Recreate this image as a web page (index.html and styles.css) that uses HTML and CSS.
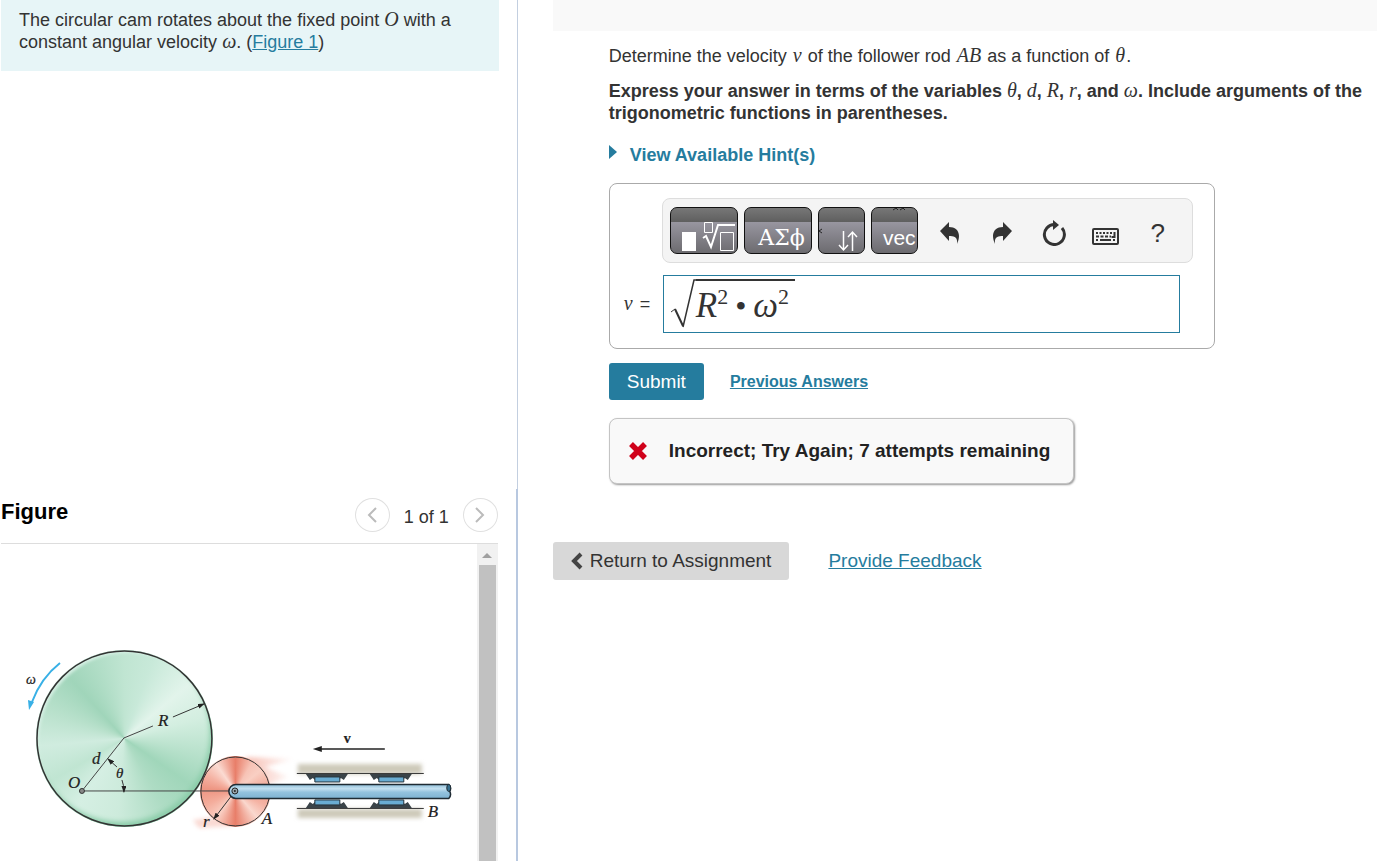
FILE: index.html
```html
<!DOCTYPE html>
<html lang="en">

<head>
  <meta charset="UTF-8">
  <meta name="viewport" content="width=device-width, initial-scale=1.0">
  <title>Circular cam</title>
  <link rel="stylesheet" href="styles.css">
</head>

<body>
  <div class="page">
    <aside class="left">
      <section class="statement">
        <p class="intro">The circular cam rotates about the fixed point <i class="math">O</i> with a constant angular velocity <i class="math">ω</i>. (<a href="#figure">Figure 1</a>)</p>
      </section>

      <section class="figure" id="figure">
        <header class="figure-head">
          <h2>Figure</h2>
          <div class="pager">
            <button type="button" class="round" aria-label="Previous figure">
              <svg width="12" height="18" viewBox="0 0 12 18"><path d="M10 2L3 9l7 7" fill="none" stroke="#bbb" stroke-width="2"/></svg>
            </button>
            <span>1 of 1</span>
            <button type="button" class="round" aria-label="Next figure">
              <svg width="12" height="18" viewBox="0 0 12 18"><path d="M2 2l7 7-7 7" fill="none" stroke="#bbb" stroke-width="2"/></svg>
            </button>
          </div>
        </header>
        <div class="figure-body">
          <svg class="cam" width="476" height="317" viewBox="1 544 476 317">
            <defs>
              <linearGradient id="rod" x1="0" y1="0" x2="0" y2="1">
                <stop offset="0" stop-color="#8fbfd9"/>
                <stop offset=".3" stop-color="#c3e0f0"/>
                <stop offset=".55" stop-color="#94c3de"/>
                <stop offset="1" stop-color="#7db2d1"/>
              </linearGradient>
              <linearGradient id="streak" x1="0" x2="1">
                <stop offset="0" stop-color="#f3a292"/>
                <stop offset="1" stop-color="#f3a292" stop-opacity="0"/>
              </linearGradient>
              <filter id="soft" x="-20%" y="-50%" width="140%" height="200%"><feGaussianBlur stdDeviation="2"/></filter>
              <marker id="head" markerUnits="userSpaceOnUse" markerWidth="7" markerHeight="5" refX="6" refY="2.500" orient="auto">
                <path d="M0 0l7 2.500-7 2.500z" fill="#222"/>
              </marker>
              <g id="pad">
                <path d="M0 0h42l-4 6-3-2-2 2H9L7 4 4 6z" fill="#3a4348"/>
                <path d="M9 3h25v5H9z" fill="#69acd2" stroke="#26343c"/>
              </g>
            </defs>

            <!-- motion streaks -->
            <path d="M245 757l50 2-30 8 24 10-22 8z" fill="url(#streak)" filter="url(#soft)" opacity=".7"/>
            <path d="M193 820l30-4 10 10-34 2z" fill="#f3a292" filter="url(#soft)" opacity=".4"/>

            <!-- cam and roller -->
            <foreignObject x="36" y="650" width="177" height="177"><div class="disc disc-green"></div></foreignObject>
            <foreignObject x="200" y="756" width="71" height="71"><div class="disc disc-red"></div></foreignObject>
            <g fill="none" stroke="#333">
              <circle cx="124.500" cy="738.500" r="87.500" stroke-width="1.500"/>
              <circle cx="235.500" cy="791.500" r="34.500"/>
              <path d="M153 726l-29 12-42 53h153" stroke="#444"/>
            </g>
            <g fill="none" stroke="#333" marker-end="url(#head)">
              <path d="M173 717l31-13"/>
              <path d="M117 767l-9-8"/>
              <path d="M122 780q2 5 2 12"/>
              <path d="M233 794l-19 25"/>
            </g>
            <circle cx="82" cy="791" r="2.500" fill="#888" stroke="#333"/>

            <!-- omega arrow -->
            <path d="M60 663q-19 15-28 39" fill="none" stroke="#38b0e6" stroke-width="2"/>
            <path d="M28 700l6 2-5 8z" fill="#38b0e6"/>

            <!-- walls and guides -->
            <rect x="298" y="764" width="124" height="10" fill="#cdc9b9" filter="url(#soft)"/>
            <rect x="298" y="809" width="124" height="9" fill="#cdc9b9" filter="url(#soft)"/>
            <path d="M297 773.500h127M297 808.500h127" stroke="#333"/>
            <use href="#pad" x="306" y="774"/>
            <use href="#pad" x="370" y="774"/>
            <use href="#pad" transform="translate(306 808) scale(1 -1)"/>
            <use href="#pad" transform="translate(370 808) scale(1 -1)"/>

            <!-- follower rod -->
            <path d="M236 784.500h213q3 3 1 7 2 4-1 7H236a7 7 0 0 1 0-14z" fill="url(#rod)" stroke="#1f2b33" stroke-width="1.500"/>
            <ellipse cx="449" cy="788" rx="2" ry="3.500" fill="#35708f" stroke="#1f2b33"/>
            <circle cx="235" cy="791" r="3" fill="#9aa7ae" stroke="#222"/>
            <circle cx="235" cy="791" r="1" fill="#222"/>

            <!-- v arrow -->
            <path d="M385 749h-64" stroke="#222" stroke-width="1.500"/>
            <path d="M313 749l9-3v6z" fill="#222"/>

            <g class="cam-label">
              <text x="26" y="684" font-size="14">ω</text>
              <text x="158" y="726">R</text>
              <text x="92" y="764">d</text>
              <text x="116" y="778" font-size="15">θ</text>
              <text x="68" y="788">O</text>
              <text x="203" y="827">r</text>
              <text x="262" y="824">A</text>
              <text x="428" y="817">B</text>
              <text x="344" y="743" font-size="14" class="upright">v</text>
            </g>
          </svg>
          <div class="scrollbar">
            <svg width="20" height="21" viewBox="0 0 20 21"><path d="M5 14l5-5 5 5z" fill="#a0a0a0"/></svg>
            <div class="thumb"></div>
          </div>
        </div>
      </section>
    </aside>

    <main class="right">
      <div class="bar"></div>
      <div class="problem">
        <p class="question">Determine the velocity <i class="math">v</i> of the follower rod <i class="math">AB</i> as a function of <i class="math">θ</i>.</p>
        <p class="express">Express your answer in terms of the variables <i class="math">θ</i>, <i class="math">d</i>, <i class="math">R</i>, <i class="math">r</i>, and <i class="math">ω</i>. Include arguments of the trigonometric functions in parentheses.</p>
        <button type="button" class="hints">
          <svg width="9" height="16" viewBox="0 0 9 16"><path d="M0 1l8 7-8 7z" fill="#257c9e"/></svg>
          View Available Hint(s)
        </button>

        <div class="answer">
          <div class="toolbar">
            <button type="button" class="key wide" aria-label="Templates">
              <svg width="56" height="32" viewBox="0 0 56 32" fill="none" stroke="#fff">
                <path d="M1 11h14v19H1z" fill="#fff" stroke="none"/>
                <path d="M23.500 1.500h8v10h-8z"/>
                <path d="M22 17l3-2 5 11 7-22h17" stroke-width="2"/>
                <path d="M39.500 11.500h13v18h-13z"/>
              </svg>
            </button>
            <button type="button" class="key wide greek">ΑΣϕ</button>
            <button type="button" class="key" aria-label="Subscripts and arrows">
              <svg width="46" height="45" viewBox="0 0 46 45" fill="none" stroke="#fff" stroke-width="1.500">
                <path d="M4 21l-3 2 3 2" stroke="#222" stroke-width="1"/>
                <path d="M25.500 23v19M21 37l4.500 5 4.500-5M34.500 43V24M30 29l4.500-5 4.500 5"/>
              </svg>
            </button>
            <button type="button" class="key vec">
              <svg width="12" height="3" viewBox="0 0 12 3"><path d="M0 2l3-2 2 2M7 2l3-2 2 2" fill="none" stroke="#222"/></svg>
              <span>vec</span>
            </button>
            <div class="tools">
              <button type="button" aria-label="Undo">
                <svg width="20" height="23" viewBox="0 0 20 23"><path d="M0 9l9-9v5c8 0 13 6 8 17 1-7-3-8-8-8v5z" fill="#333"/></svg>
              </button>
              <button type="button" aria-label="Redo">
                <svg width="20" height="23" viewBox="0 0 20 23"><path d="M20 9l-9-9v5C3 5-2 11 3 22c-1-7 3-8 8-8v5z" fill="#333"/></svg>
              </button>
              <button type="button" aria-label="Reset">
                <svg width="24" height="26" viewBox="0 0 24 26"><path d="M13 4.500a10 10 0 1 0 7 3.500" fill="none" stroke="#333" stroke-width="3"/><path d="M11 0l6 5-6 5z" fill="#333"/></svg>
              </button>
              <button type="button" aria-label="Keyboard">
                <svg class="keyboard" width="27" height="17" viewBox="0 0 27 17" fill="none" stroke="#333">
                  <rect x="1" y="1" width="25" height="15" rx="1" stroke-width="2"/>
                  <path d="M4 5h16" stroke-width="2" stroke-dasharray="2 1.500"/>
                  <path d="M4 8.500h15" stroke-width="2" stroke-dasharray="3 1.500"/>
                  <path d="M4 12h2M8 12h11M21 12h2" stroke-width="2"/>
                  <path d="M22.500 4v5h-3" stroke-width="2"/>
                </svg>
              </button>
              <button type="button" class="help" aria-label="Help">?</button>
            </div>
          </div>
          <span class="answer-label" id="answer-label"><i class="math">v</i> =</span>
          <div class="entry" role="textbox" contenteditable="true" aria-labelledby="answer-label">
            <svg width="25" height="50" viewBox="0 0 25 50"><path d="M0 33l4-3" fill="none" stroke="#333"/><path d="M4 30l8 17" fill="none" stroke="#333" stroke-width="2"/><path d="M12 48L23 1h2" fill="none" stroke="#333" stroke-width="1.500"/></svg>
            <span class="radicand"><i>R</i><sup>2</sup><b class="dot">•</b><i>ω</i><sup>2</sup></span>
          </div>
        </div>

        <div class="actions">
          <button type="button" class="submit">Submit</button>
          <a href="#previous">Previous Answers</a>
        </div>

        <div class="result">
          <svg width="20" height="20" viewBox="0 0 20 20"><path d="M3 3l14 14M17 3L3 17" stroke="#d0021b" stroke-width="5.500"/></svg>
          <span>Incorrect; Try Again; 7 attempts remaining</span>
        </div>
      </div>

      <footer class="footer">
        <button type="button" class="return">
          <svg width="12" height="19" viewBox="0 0 12 19"><path d="M10 2L3 9l7 7" fill="none" stroke="#444" stroke-width="4"/></svg>
          Return to Assignment
        </button>
        <a href="#feedback">Provide Feedback</a>
      </footer>
    </main>
  </div>
</body>

</html>
```
FILE: styles.css
```css
* {
  margin: 0;
  padding: 0;
  box-sizing: border-box;
}

body {
  font: 18px/22px "Liberation Sans", Arial, sans-serif;
  color: #333;
  background-color: #fff;
}

button {
  font: inherit;
  color: inherit;
  border: 0;
  background: none;
  cursor: pointer;
}

svg {
  display: block;
  flex: none;
}

a {
  color: #257c9e;
}

.math {
  font-family: "Liberation Serif", "Times New Roman", serif;
  font-size: 20px;
  font-weight: normal;
  line-height: 18px;
}

.question .math {
  margin: 0 1px;
}

.page {
  display: flex;
  min-height: 100vh;
}

/* left column */
.left {
  display: flex;
  flex-direction: column;
  width: 37.6%;
  height: 100vh;
}

.statement {
  flex: 1;
  padding: 0 18px 0 1px;
  border-right: 1px solid #c3cfe0;
}

.intro {
  padding: 9px 18px 18px;
  background-color: #e7f5f7;
}

.figure {
  display: flex;
  flex-direction: column;
  padding: 0 18px 0 1px;
  border-right: 2px solid #b8c8e0;
}

.figure-head {
  display: flex;
  justify-content: space-between;
  padding: 9px 0 11px;
  border-bottom: 1px solid #ddd;
}

.figure-head h2 {
  padding-top: 3px;
  font-size: 22px;
  color: #000;
}

.pager {
  display: flex;
  align-items: center;
  gap: 14px;
}

.pager span {
  padding-top: 4px;
}

.round {
  display: flex;
  align-items: center;
  justify-content: center;
  width: 35px;
  height: 34px;
  border: 1px solid #e0e0e0;
  border-radius: 50%;
}

.figure-body {
  display: flex;
  justify-content: space-between;
}

.cam {
  flex: 0 1 auto;
  min-width: 0;
}

.cam-label {
  font: italic 17px "Liberation Serif", "Times New Roman", serif;
  fill: #222;
  stroke: #222;
  stroke-width: .2px;
}

.cam-label .upright {
  font-style: normal;
  font-weight: bold;
}

.disc {
  height: 100%;
  border-radius: 50%;
}

.disc-green {
  background: conic-gradient(#c0e5d2, #c8e9d9 20deg, #e2f4eb 50deg, #d3eee0 75deg, #bae2cd 100deg, #a0d6ba 125deg, #aedcc4 150deg, #cdebdc 185deg, #d5efe3 215deg, #c0e5d2 240deg, #d0ecdf 265deg, #b9e1cc 290deg, #a0d5ba 318deg, #c0e5d2);
  box-shadow: inset -3px -5px 5px #8ccdaa, inset 3px 3px 3px #d5efe3;
}

.disc-red {
  background: conic-gradient(#e87e69, #f7c3b6 30deg, #f9cfc3 50deg, #f0a08e 90deg, #f5b3a4 115deg, #fad8ce 140deg, #e87e69 180deg, #f9cfc3 215deg, #f4ad9c 245deg, #ee9582 275deg, #f5b3a4 300deg, #fbdbd2 325deg, #e87e69);
}

.scrollbar {
  display: flex;
  flex-direction: column;
  width: 21px;
  background-color: #f1f1f1;
}

.thumb {
  flex: 1;
  margin: 0 2px;
  background-color: #c1c1c1;
}

/* right column */
.right {
  flex: 1;
  padding-left: 35px;
}

.bar {
  height: 31px;
  background-color: #f9f9f9;
}

.problem {
  padding: 14px 8px 0 56px;
}

.express {
  margin-top: 13px;
  font-weight: bold;
}

.hints {
  display: flex;
  gap: 12px;
  margin-top: 20px;
  font-weight: bold;
  color: #257c9e;
}

.answer {
  display: grid;
  grid-template-columns: 38px 1fr;
  row-gap: 12px;
  align-items: center;
  max-width: 606px;
  margin-top: 17px;
  padding: 14px 21px 15px 14px;
  border: 1px solid #aaa;
  border-radius: 8px;
}

.toolbar {
  grid-column: 2;
  display: flex;
  align-items: flex-start;
  gap: 6px;
  padding: 8px 7px;
  border: 1px solid #ddd;
  border-radius: 8px;
  background-color: #f4f4f4;
}

.key {
  display: flex;
  align-items: flex-end;
  justify-content: flex-end;
  width: 47px;
  height: 47px;
  border: 1px solid #111;
  border-radius: 7px;
  overflow: hidden;
  color: #fff;
  background: linear-gradient(#777 0, #5f5f5f 14px, #9896a0 14px, #6c6b6f 100%);
}

.key.wide {
  width: 68px;
}

.greek {
  padding: 0 6px 4px 0;
  font: 22px/22px "DejaVu Serif", serif;
}

.vec {
  flex-direction: column;
  align-items: center;
  justify-content: space-between;
  padding: 0 0 4px 10px;
  font-size: 21px;
}

.tools {
  display: flex;
  align-items: center;
}

.tools button {
  display: flex;
  align-items: center;
  justify-content: center;
  width: 52px;
  height: 47px;
  padding-top: 5px;
}

.keyboard {
  margin-top: 6px;
}

.tools .help {
  font-size: 26px;
}

.answer-label .math {
  padding-right: 2px;
}

.entry {
  display: flex;
  align-items: flex-start;
  height: 58px;
  margin: 0 13px 0 1px;
  padding: 3px 7px;
  border: 1px solid #257c9e;
}

.radicand {
  padding-right: 6px;
  border-top: 2px solid #333;
  font: 35px/50px "Liberation Serif", "Times New Roman", serif;
}

.radicand sup {
  font-size: 22px;
  line-height: 1px;
}

.dot {
  margin: 0 7px;
  font-size: 32px;
  font-weight: normal;
  line-height: 1px;
}

.actions {
  display: flex;
  align-items: center;
  gap: 26px;
  margin-top: 14px;
}

.actions a {
  font-size: 16px;
  font-weight: bold;
}

.submit {
  height: 37px;
  padding: 0 18px;
  border-radius: 3px;
  font-size: 19px;
  color: #fff;
  background-color: #257c9e;
}

.result {
  display: flex;
  align-items: center;
  gap: 21px;
  width: fit-content;
  height: 66px;
  margin-top: 18px;
  padding: 0 23px 0 18px;
  border: 1px solid #c4c4c4;
  border-radius: 8px;
  box-shadow: 1px 1px 2px #999;
  font-size: 19px;
  font-weight: bold;
  color: #222;
  background-color: #f9f9f9;
}

.footer {
  display: flex;
  align-items: center;
  gap: 39px;
  margin-top: 58px;
  font-size: 19px;
}

.return {
  display: flex;
  align-items: center;
  gap: 7px;
  height: 38px;
  padding: 0 18px;
  border-radius: 3px;
  background-color: #d8d8d8;
}
```
